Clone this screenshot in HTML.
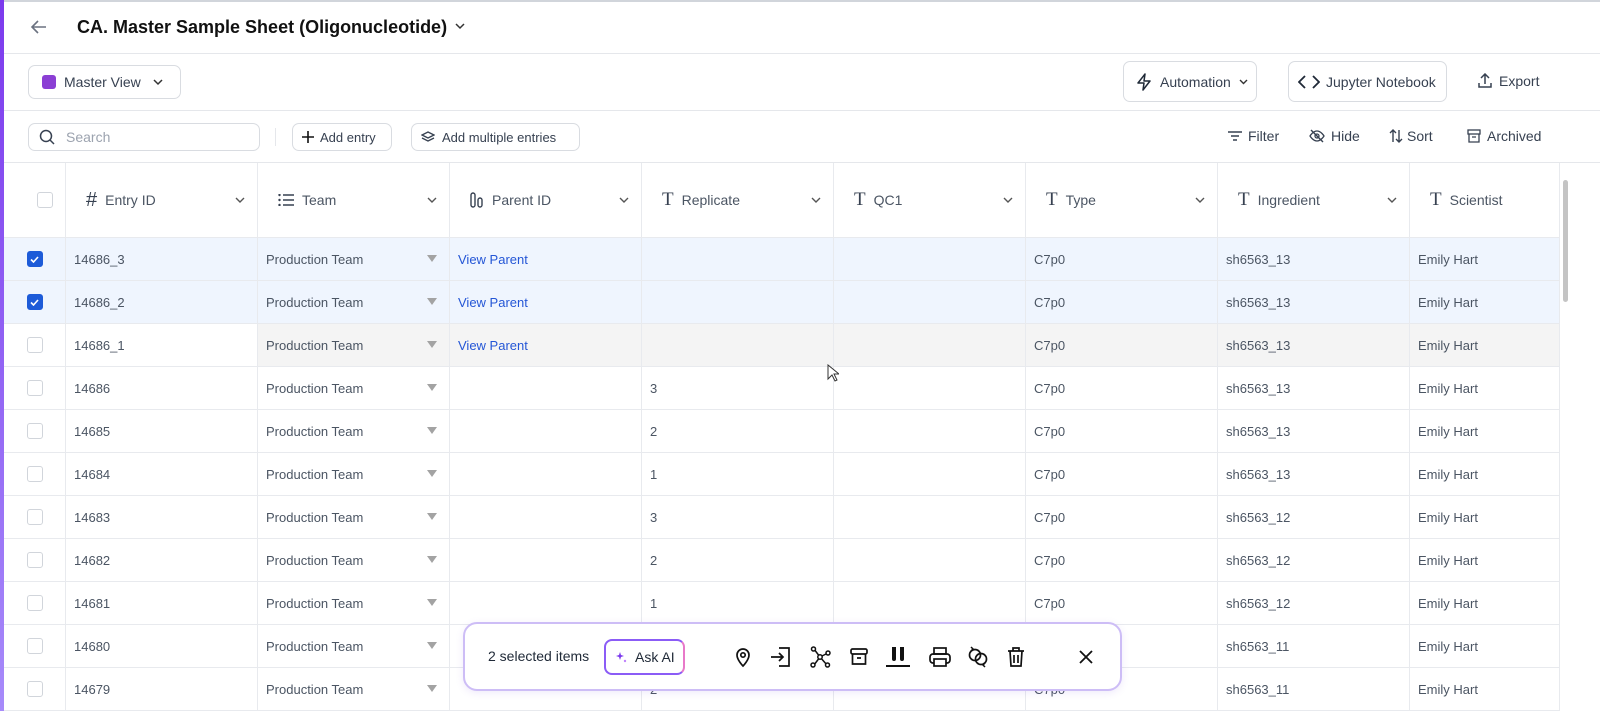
<!DOCTYPE html>
<html><head><meta charset="utf-8">
<style>
*{box-sizing:border-box;margin:0;padding:0}
body{width:1600px;height:711px;overflow:hidden;background:#fff;font-family:"Liberation Sans",sans-serif;position:relative;color:#1f2937}
.abs{position:absolute}
.lb{position:absolute;left:0;top:0;width:4px;height:711px;background:linear-gradient(#7c3aed,#a78bfa)}
.topline{position:absolute;left:0;top:0;width:1600px;height:2px;background:#d1d5db}
.hr{position:absolute;left:4px;width:1596px;height:1px;background:#e5e7eb}
.btn{position:absolute;border:1px solid #d9dce1;border-radius:7px;background:#fff;display:flex;align-items:center;font-size:14px;color:#374151}
.tb{position:absolute;display:flex;align-items:center;font-size:14px;color:#374151;gap:6px}
.grid{position:absolute;left:4px;top:163px}
.row{display:flex;height:43px;border-bottom:1px solid #e8eaee}
.row.h{height:75px}
.c{border-right:1px solid #e8eaee;display:flex;align-items:center;padding-left:8px;font-size:13px;color:#4b5563;position:relative;flex:none}
.c0{width:62px;justify-content:center;padding:0}
.w{width:192px}
.wl{width:150px}
.h .c{font-size:14px;color:#4b5563;padding-left:20px;gap:8px;align-items:center}
.h .c svg.ch{position:absolute;right:12px;top:34px}
.sel{background:#eff5fe}
.g{background:#f4f4f4}
.cb{width:16px;height:16px;border:1px solid #d1d5db;border-radius:3px;background:#fff}
.cb.on{background:#1d5bd8;border-color:#1d5bd8;display:flex;align-items:center;justify-content:center}
.tri{position:absolute;right:12px;top:17px;width:0;height:0;border-left:5px solid transparent;border-right:5px solid transparent;border-top:7px solid #a3a3a3}
.lnk{color:#2456d6}
.bar{position:absolute;left:463px;top:622px;width:659px;height:69px;border:2px solid #cdbdf6;border-radius:14px;background:#fff;box-shadow:0 2px 8px rgba(120,80,220,.12)}
</style></head><body>
<div class="topline"></div>
<div class="lb"></div>
<svg class="abs" style="left:30px;top:19px" width="18" height="16" viewBox="0 0 18 16"><path d="M16 8H2M8 2L2 8l6 6" fill="none" stroke="#6b7280" stroke-width="1.6"/></svg>
<div class="abs" style="left:77px;top:17px;font-size:18px;font-weight:bold;color:#111">CA. Master Sample Sheet (Oligonucleotide)</div>
<svg class="abs" style="left:455px;top:23px" width="10" height="7"><path d="M1 1l4 4 4-4" fill="none" stroke="#333" stroke-width="1.5"/></svg>
<div class="hr" style="top:53px"></div>
<div class="btn" style="left:28px;top:65px;width:153px;height:34px;padding-left:13px;gap:8px"><span style="width:14px;height:14px;background:#8b3fd4;border-radius:3px;display:inline-block"></span>Master View<svg width="10" height="7" style="margin-left:4px"><path d="M1 1l4 4 4-4" fill="none" stroke="#333" stroke-width="1.5"/></svg></div>
<div class="btn" style="left:1123px;top:61px;width:134px;height:41px;padding-left:12px;gap:8px"><svg width="16" height="18" viewBox="0 0 16 18"><path d="M9 1L2 10h6l-1 7 7-9H8z" fill="none" stroke="#1f2937" stroke-width="1.5" stroke-linejoin="round"/></svg>Automation<svg width="9" height="6"><path d="M1 1l3.5 3.5L8 1" fill="none" stroke="#333" stroke-width="1.4"/></svg></div>
<div class="btn" style="left:1288px;top:61px;width:159px;height:41px;padding-left:9px;gap:6px"><svg width="22" height="14" viewBox="0 0 22 14"><path d="M7 1L1 7l6 6M15 1l6 6-6 6" fill="none" stroke="#1f2937" stroke-width="1.8"/></svg>Jupyter Notebook</div>
<div class="tb" style="left:1477px;top:73px"><svg width="16" height="16" viewBox="0 0 16 16"><path d="M8 11V2M4 5l4-4 4 4M2 10v4h12v-4" fill="none" stroke="#374151" stroke-width="1.5"/></svg>Export</div>
<div class="hr" style="top:110px"></div>
<div class="btn" style="left:28px;top:123px;width:232px;height:28px;padding-left:10px;gap:11px;color:#9ca3af"><svg width="16" height="16" viewBox="0 0 16 16"><circle cx="7" cy="7" r="5.5" fill="none" stroke="#374151" stroke-width="1.5"/><path d="M11 11l4 4" stroke="#374151" stroke-width="1.5"/></svg>Search</div>
<div class="abs" style="left:275px;top:128px;width:1px;height:18px;background:#e5e7eb"></div>
<div class="btn" style="left:292px;top:123px;width:100px;height:28px;padding-left:9px;gap:6px;font-size:13px"><svg width="12" height="12"><path d="M6 0v12M0 6h12" stroke="#111" stroke-width="1.6"/></svg>Add entry</div>
<div class="btn" style="left:411px;top:123px;width:169px;height:28px;padding-left:9px;gap:7px;font-size:13px"><svg width="14" height="12" viewBox="0 0 14 12"><path d="M7 1l6 3-6 3-6-3zM1 7l6 3 6-3" fill="none" stroke="#374151" stroke-width="1.3"/></svg>Add multiple entries</div>
<div class="tb" style="left:1228px;top:128px"><svg width="14" height="12"><path d="M0 2h14M3 6h8M5 10h4" stroke="#374151" stroke-width="1.5"/></svg>Filter</div>
<div class="tb" style="left:1309px;top:128px"><svg width="16" height="14" viewBox="0 0 16 14"><path d="M1 7s3-5 7-5 7 5 7 5-3 5-7 5-7-5-7-5z" fill="none" stroke="#374151" stroke-width="1.3"/><circle cx="8" cy="7" r="2" fill="none" stroke="#374151" stroke-width="1.3"/><path d="M2 1l12 12" stroke="#374151" stroke-width="1.4"/></svg>Hide</div>
<div class="tb" style="left:1389px;top:128px;gap:4px"><svg width="14" height="14" viewBox="0 0 14 14"><path d="M4 13V1M1 4l3-3 3 3M10 1v12M7 10l3 3 3-3" fill="none" stroke="#374151" stroke-width="1.4"/></svg>Sort</div>
<div class="tb" style="left:1467px;top:128px"><svg width="14" height="14" viewBox="0 0 14 14"><rect x="1" y="1" width="12" height="4" fill="none" stroke="#374151" stroke-width="1.3"/><path d="M2 5v8h10V5M5 8h4" fill="none" stroke="#374151" stroke-width="1.3"/></svg>Archived</div>
<div class="hr" style="top:162px"></div>

<div class="grid">
<div class="row h">
<div class="c c0"><div class="cb"></div></div>
<div class="c w"><span style="font-size:20px;color:#374151">#</span>Entry ID<svg class="ch" width="10" height="6"><path d="M1 1l4 4 4-4" fill="none" stroke="#555" stroke-width="1.4"/></svg></div>
<div class="c w"><svg width="16" height="12"><path d="M5 1h11M5 6h11M5 11h11" stroke="#374151" stroke-width="1.5"/><circle cx="1.5" cy="1" r="1.2" fill="#374151"/><circle cx="1.5" cy="6" r="1.2" fill="#374151"/><circle cx="1.5" cy="11" r="1.2" fill="#374151"/></svg>Team<svg class="ch" width="10" height="6"><path d="M1 1l4 4 4-4" fill="none" stroke="#555" stroke-width="1.4"/></svg></div>
<div class="c w"><svg width="14" height="16"><rect x="1" y="1" width="4" height="14" rx="2" fill="none" stroke="#374151" stroke-width="1.4"/><rect x="8" y="6" width="4" height="9" rx="2" fill="none" stroke="#374151" stroke-width="1.4"/></svg>Parent ID<svg class="ch" width="10" height="6"><path d="M1 1l4 4 4-4" fill="none" stroke="#555" stroke-width="1.4"/></svg></div>
<div class="c w"><span style="font-family:'Liberation Serif',serif;font-size:19px;color:#374151">T</span>Replicate<svg class="ch" width="10" height="6"><path d="M1 1l4 4 4-4" fill="none" stroke="#555" stroke-width="1.4"/></svg></div>
<div class="c w"><span style="font-family:'Liberation Serif',serif;font-size:19px;color:#374151">T</span>QC1<svg class="ch" width="10" height="6"><path d="M1 1l4 4 4-4" fill="none" stroke="#555" stroke-width="1.4"/></svg></div>
<div class="c w"><span style="font-family:'Liberation Serif',serif;font-size:19px;color:#374151">T</span>Type<svg class="ch" width="10" height="6"><path d="M1 1l4 4 4-4" fill="none" stroke="#555" stroke-width="1.4"/></svg></div>
<div class="c w"><span style="font-family:'Liberation Serif',serif;font-size:19px;color:#374151">T</span>Ingredient<svg class="ch" width="10" height="6"><path d="M1 1l4 4 4-4" fill="none" stroke="#555" stroke-width="1.4"/></svg></div>
<div class="c wl"><span style="font-family:'Liberation Serif',serif;font-size:19px;color:#374151">T</span>Scientist</div>
</div>
<div class="row sel"><div class="c c0"><div class="cb on"><svg width="9" height="7"><path d="M1 3.5l2.5 2.5L8 1" fill="none" stroke="#fff" stroke-width="1.6"/></svg></div></div><div class="c w">14686_3</div><div class="c w">Production Team<i class="tri"></i></div><div class="c w lnk">View Parent</div><div class="c w"></div><div class="c w"></div><div class="c w">C7p0</div><div class="c w">sh6563_13</div><div class="c wl">Emily Hart</div></div>
<div class="row sel"><div class="c c0"><div class="cb on"><svg width="9" height="7"><path d="M1 3.5l2.5 2.5L8 1" fill="none" stroke="#fff" stroke-width="1.6"/></svg></div></div><div class="c w">14686_2</div><div class="c w">Production Team<i class="tri"></i></div><div class="c w lnk">View Parent</div><div class="c w"></div><div class="c w"></div><div class="c w">C7p0</div><div class="c w">sh6563_13</div><div class="c wl">Emily Hart</div></div>
<div class="row"><div class="c c0"><div class="cb"></div></div><div class="c w">14686_1</div><div class="c w g">Production Team<i class="tri"></i></div><div class="c w g lnk">View Parent</div><div class="c w g"></div><div class="c w g"></div><div class="c w g">C7p0</div><div class="c w g">sh6563_13</div><div class="c wl g">Emily Hart</div></div>
<div class="row"><div class="c c0"><div class="cb"></div></div><div class="c w">14686</div><div class="c w">Production Team<i class="tri"></i></div><div class="c w"></div><div class="c w">3</div><div class="c w"></div><div class="c w">C7p0</div><div class="c w">sh6563_13</div><div class="c wl">Emily Hart</div></div>
<div class="row"><div class="c c0"><div class="cb"></div></div><div class="c w">14685</div><div class="c w">Production Team<i class="tri"></i></div><div class="c w"></div><div class="c w">2</div><div class="c w"></div><div class="c w">C7p0</div><div class="c w">sh6563_13</div><div class="c wl">Emily Hart</div></div>
<div class="row"><div class="c c0"><div class="cb"></div></div><div class="c w">14684</div><div class="c w">Production Team<i class="tri"></i></div><div class="c w"></div><div class="c w">1</div><div class="c w"></div><div class="c w">C7p0</div><div class="c w">sh6563_13</div><div class="c wl">Emily Hart</div></div>
<div class="row"><div class="c c0"><div class="cb"></div></div><div class="c w">14683</div><div class="c w">Production Team<i class="tri"></i></div><div class="c w"></div><div class="c w">3</div><div class="c w"></div><div class="c w">C7p0</div><div class="c w">sh6563_12</div><div class="c wl">Emily Hart</div></div>
<div class="row"><div class="c c0"><div class="cb"></div></div><div class="c w">14682</div><div class="c w">Production Team<i class="tri"></i></div><div class="c w"></div><div class="c w">2</div><div class="c w"></div><div class="c w">C7p0</div><div class="c w">sh6563_12</div><div class="c wl">Emily Hart</div></div>
<div class="row"><div class="c c0"><div class="cb"></div></div><div class="c w">14681</div><div class="c w">Production Team<i class="tri"></i></div><div class="c w"></div><div class="c w">1</div><div class="c w"></div><div class="c w">C7p0</div><div class="c w">sh6563_12</div><div class="c wl">Emily Hart</div></div>
<div class="row"><div class="c c0"><div class="cb"></div></div><div class="c w">14680</div><div class="c w">Production Team<i class="tri"></i></div><div class="c w"></div><div class="c w">3</div><div class="c w"></div><div class="c w">C7p0</div><div class="c w">sh6563_11</div><div class="c wl">Emily Hart</div></div>
<div class="row"><div class="c c0"><div class="cb"></div></div><div class="c w">14679</div><div class="c w">Production Team<i class="tri"></i></div><div class="c w"></div><div class="c w">2</div><div class="c w"></div><div class="c w">C7p0</div><div class="c w">sh6563_11</div><div class="c wl">Emily Hart</div></div>
</div>
<div class="abs" style="left:1563px;top:180px;width:5px;height:122px;background:#c4c4c4;border-radius:3px"></div>
<svg class="abs" style="left:827px;top:364px" width="12" height="18" viewBox="0 0 12 18"><path d="M1 1v14l4-4 3 6 2-1-3-6h5z" fill="#fff" stroke="#333" stroke-width="1"/></svg>

<div class="bar">
<div class="abs" style="left:23px;top:24px;font-size:14px;color:#1f2937">2 selected items</div>
<div class="abs" style="left:139px;top:15px;width:81px;height:36px;border-radius:8px;border:2px solid #8b5cf6;border-right-color:#e879c9;display:flex;align-items:center;padding-left:9px;gap:8px;font-size:14px;color:#1f2937"><svg width="12" height="12" viewBox="0 0 12 12"><path d="M5 1l1 3 3 1-3 1-1 3-1-3-3-1 3-1z" fill="#7c3aed"/><circle cx="10" cy="10" r="1.2" fill="#c084fc"/></svg>Ask AI</div>
<svg class="abs" style="left:268px;top:22px" width="20" height="22" viewBox="0 0 20 22"><path d="M10 20s-6-6-6-11a6 6 0 0112 0c0 5-6 11-6 11z" fill="none" stroke="#111" stroke-width="1.7"/><circle cx="10" cy="9" r="2.2" fill="none" stroke="#111" stroke-width="1.7"/></svg>
<svg class="abs" style="left:305px;top:22px" width="22" height="22" viewBox="0 0 22 22"><path d="M9 2h10v18H9M1 11h12M9 7l4 4-4 4" fill="none" stroke="#111" stroke-width="1.7"/></svg>
<svg class="abs" style="left:344px;top:22px" width="22" height="22" viewBox="0 0 22 22"><path d="M11 11L5 3M11 11l8-4M11 11l-6 8M11 11l7 8" stroke="#111" stroke-width="1.5"/><g fill="#fff" stroke="#111" stroke-width="1.5"><circle cx="11" cy="11" r="2.2"/><circle cx="4.5" cy="3" r="2"/><circle cx="19" cy="7" r="2"/><circle cx="4" cy="19" r="2"/><circle cx="18.5" cy="19" r="2"/></g></svg>
<svg class="abs" style="left:384px;top:23px" width="20" height="20" viewBox="0 0 20 20"><rect x="2" y="2" width="16" height="5" rx="1.5" fill="none" stroke="#111" stroke-width="1.7"/><path d="M3.5 7v10h13V7M8 11h4" fill="none" stroke="#111" stroke-width="1.7"/></svg>
<svg class="abs" style="left:420px;top:21px" width="26" height="24" viewBox="0 0 26 24"><path d="M7 2v12a2 2 0 004 0V2zM15 2v12a2 2 0 004 0V2z" fill="#111"/><path d="M1 21h24" stroke="#111" stroke-width="2"/></svg>
<svg class="abs" style="left:463px;top:22px" width="24" height="22" viewBox="0 0 24 22"><rect x="6" y="2" width="12" height="6" fill="none" stroke="#111" stroke-width="1.7"/><rect x="2" y="8" width="20" height="9" rx="3" fill="none" stroke="#111" stroke-width="1.7"/><rect x="6" y="13" width="12" height="7" fill="#fff" stroke="#111" stroke-width="1.7"/></svg>
<svg class="abs" style="left:502px;top:21px" width="22" height="24" viewBox="0 0 22 24"><circle cx="8" cy="10" r="5.5" fill="none" stroke="#111" stroke-width="1.7"/><circle cx="14" cy="14" r="5.5" fill="none" stroke="#111" stroke-width="1.7"/><path d="M4 2l2 2-2 2M18 22l-2-2 2-2" fill="none" stroke="#111" stroke-width="1.5"/></svg>
<svg class="abs" style="left:542px;top:22px" width="18" height="22" viewBox="0 0 18 22"><path d="M1 5h16M6 5V2h6v3M3 5l1 15h10l1-15M7 9v8M11 9v8" fill="none" stroke="#111" stroke-width="1.7"/></svg>
<svg class="abs" style="left:614px;top:26px" width="14" height="14" viewBox="0 0 14 14"><path d="M1 1l12 12M13 1L1 13" stroke="#111" stroke-width="1.8"/></svg>
</div>
</body></html>
